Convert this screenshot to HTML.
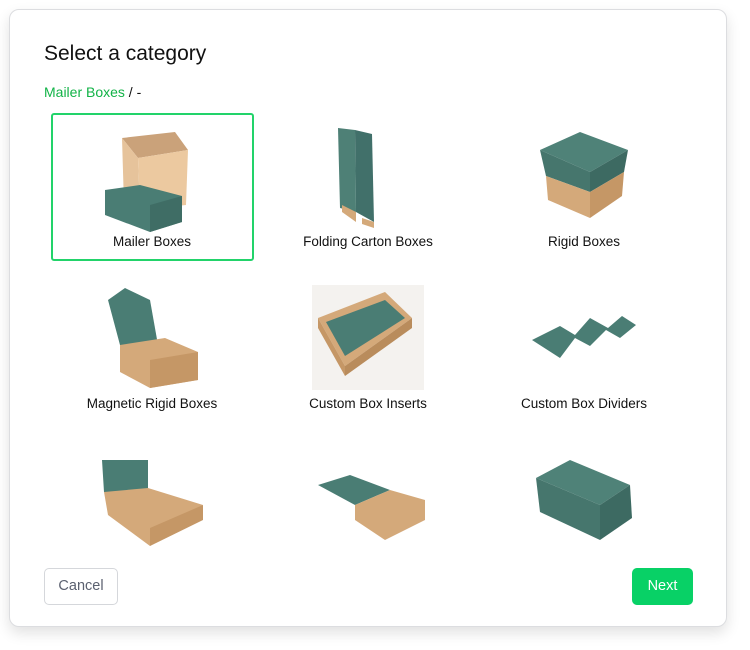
<!DOCTYPE html>
<html><head><style>
*{box-sizing:border-box;}
body{margin:0;background:#fff;width:750px;height:650px;overflow:hidden;font-family:"Liberation Sans",sans-serif;}
.card{position:absolute;left:9px;top:9px;width:718px;height:618px;border:1px solid #dcdde0;border-radius:10px;box-shadow:0 6px 14px rgba(0,0,0,.12);background:#fff;overflow:hidden;}
h1{position:absolute;left:34px;top:32px;margin:0;font-size:21px;font-weight:normal;color:#111;}
.bc{position:absolute;left:34px;top:74px;font-size:14px;color:#111;}
.bc span{color:#12b347;}
.lbl{position:absolute;width:202px;text-align:center;font-size:13.5px;color:#111;}
.sel{position:absolute;left:41px;top:103px;width:203px;height:148px;border:2px solid #22d36a;border-radius:3px;}
svg{position:absolute;left:0;top:0;}
.btn{position:absolute;top:558px;height:37px;border-radius:5px;font-size:14.5px;line-height:35px;text-align:center;}
</style></head><body>
<div class="card">
<h1>Select a category</h1>
<div class="bc"><span>Mailer Boxes</span> / -</div>
<div class="sel"></div>
<svg width="716" height="560" viewBox="10 10 716 560">
<polygon points="122,138 175,132 188,150 138,158" fill="#caa27a"/>
<polygon points="122,138 138,158 140,210 124,205" fill="#e6c39b"/>
<polygon points="138,158 188,150 186,205 140,210" fill="#ecc9a0"/>
<polygon points="105,190 140,185 182,196 182,222 150,232 105,215" fill="#4a7d74"/>
<polygon points="150,205 182,196 182,222 150,232" fill="#3f6d65"/>
<polygon points="338,128 355,130 356,212 340,208" fill="#4e8076"/>
<polygon points="355,130 372,134 374,222 356,212" fill="#41706a"/>
<polygon points="342,205 356,212 356,222 342,212" fill="#d4a97a"/>
<polygon points="362,218 374,222 374,228 362,224" fill="#d4a97a"/>
<polygon points="540,150 580,132 628,150 590,172" fill="#4f8278"/>
<polygon points="540,150 590,172 590,192 546,176" fill="#46766d"/>
<polygon points="590,172 628,150 624,172 590,192" fill="#3d6a62"/>
<polygon points="546,176 590,192 590,218 548,200" fill="#d4a97a"/>
<polygon points="590,192 624,172 622,196 590,218" fill="#c59766"/>
<polygon points="108,300 125,288 150,300 158,345 120,345" fill="#4a7d74"/>
<polygon points="120,345 165,338 198,352 198,380 150,388 120,372" fill="#d4a97a"/>
<polygon points="150,360 198,352 198,380 150,388" fill="#c59766"/>
<rect x="312" y="285" width="112" height="105" fill="#f4f2ef"/>
<polygon points="318,318 385,292 412,318 345,366" fill="#d4a97a"/>
<polygon points="326,322 385,300 405,318 345,356" fill="#4a7d74"/>
<polygon points="318,318 345,366 345,376 318,328" fill="#c59766"/>
<polygon points="345,366 412,318 412,328 345,376" fill="#b98c5c"/>
<polygon points="532,340 560,326 575,335 590,318 608,328 622,316 636,325 620,338 606,330 590,346 575,338 560,358" fill="#4a7d74"/>
<polygon points="102,460 148,460 148,492 104,492" fill="#4a7d74"/>
<polygon points="104,492 148,488 203,505 150,546 108,515" fill="#d4a97a"/>
<polygon points="150,528 203,505 203,520 150,546" fill="#c59766"/>
<polygon points="318,485 350,475 390,490 355,505" fill="#4a7d74"/>
<polygon points="355,505 390,490 425,500 425,520 385,540 355,520" fill="#d4a97a"/>
<polygon points="536,478 570,460 630,485 600,505" fill="#4f8278"/>
<polygon points="536,478 600,505 600,540 540,512" fill="#46766d"/>
<polygon points="600,505 630,485 632,518 600,540" fill="#3d6a62"/>
</svg>
<div class="lbl" style="left:41px;top:224px">Mailer Boxes</div>
<div class="lbl" style="left:257px;top:224px">Folding Carton Boxes</div>
<div class="lbl" style="left:473px;top:224px">Rigid Boxes</div>
<div class="lbl" style="left:41px;top:386px">Magnetic Rigid Boxes</div>
<div class="lbl" style="left:257px;top:386px">Custom Box Inserts</div>
<div class="lbl" style="left:473px;top:386px">Custom Box Dividers</div>
<div class="btn" style="left:34px;width:74px;border:1px solid #d5d7db;color:#5b6170;">Cancel</div>
<div class="btn" style="left:622px;width:61px;background:#08d166;color:#fff;line-height:37px;">Next</div>
</div>
</body></html>
